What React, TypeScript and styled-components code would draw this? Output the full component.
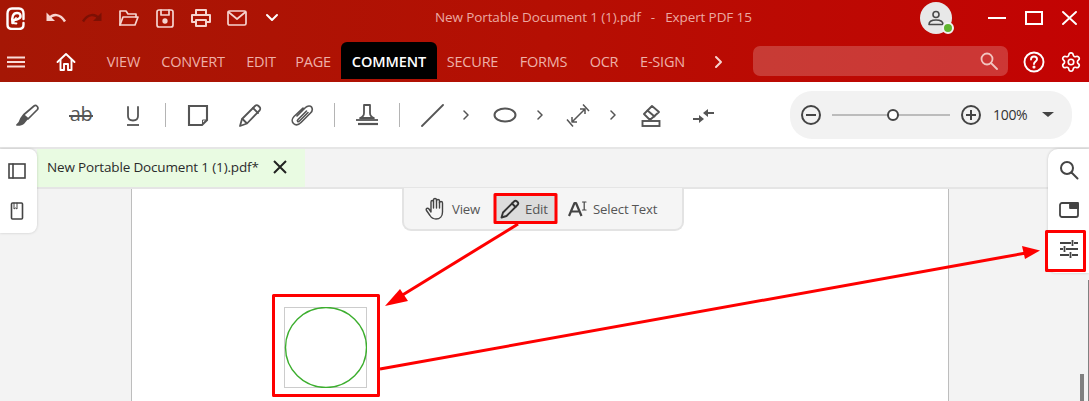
import React from "react";
import styled, { createGlobalStyle } from "styled-components";
import { Settings } from "lucide-react";

const Global = createGlobalStyle`
  html, body { margin: 0; padding: 0; background: #f3f3f3; }
  body { font-family: "Open Sans", "Noto Sans", "Liberation Sans", sans-serif; }
`;

const Screen = styled.div`
  position: relative;
  width: 1089px;
  height: 401px;
  overflow: hidden;
  display: flex;
  flex-direction: column;
`;

const Header = styled.header`
  height: 82px;
  flex: none;
  background: linear-gradient(90deg, #a51705 0%, #b50f03 50%, #c30303 100%);
  display: flex;
  flex-direction: column;
`;

const TitleBar = styled.div`
  position: relative;
  height: 42px;
  flex: none;
  display: flex;
  align-items: center;
  padding: 0 0 6px 0;
  box-sizing: border-box;
`;

const QuickIcon = styled.span<{ $left: number; $w?: number }>`
  display: flex;
  flex: none;
  width: ${(p) => p.$w ?? 22}px;
  margin-left: ${(p) => p.$left}px;
  justify-content: center;
`;

const DocTitle = styled.div`
  position: absolute;
  left: 435px;
  top: 8px;
  font-size: 13.5px;
  letter-spacing: -0.12px;
  word-spacing: 0;
  color: #eba9a2;
  white-space: pre;
`;

const TitleRight = styled.div`
  margin-left: auto;
  display: flex;
  align-items: center;
`;

const Avatar = styled.div`
  position: relative;
  width: 32px;
  height: 32px;
  border-radius: 50%;
  background: #e8e8e8;
  display: flex;
  align-items: center;
  justify-content: center;
  margin-right: 36px;
`;

const Presence = styled.span`
  position: absolute;
  right: -2px;
  bottom: 0;
  width: 8px;
  height: 8px;
  border-radius: 50%;
  background: #5fb52f;
  border: 2px solid #f2f2f2;
`;

const WinButton = styled.span<{ $mr: number }>`
  display: flex;
  margin-right: ${(p) => p.$mr}px;
`;

const MenuBar = styled.nav`
  height: 40px;
  display: flex;
  align-items: flex-start;
`;

const MenuIcon = styled.span<{ $ml: number }>`
  display: flex;
  height: 39px;
  align-items: center;
  margin-left: ${(p) => p.$ml}px;
`;

const Tab = styled.div<{ $active?: boolean; $ml: number; $w: number }>`
  flex: none;
  box-sizing: border-box;
  height: 37px;
  padding-top: 2px;
  width: ${(p) => p.$w}px;
  margin-left: ${(p) => p.$ml}px;
  display: flex;
  align-items: center;
  justify-content: center;
  white-space: nowrap;
  font-size: 14.5px;
  letter-spacing: ${(p) => (p.$active ? "-0.1px" : "-0.22px")};
  font-weight: ${(p) => (p.$active ? 600 : 400)};
  color: ${(p) => (p.$active ? "#ffffff" : "#eeb0a8")};
  background: ${(p) => (p.$active ? "#000000" : "transparent")};
  border-radius: ${(p) => (p.$active ? "6px 6px 0 0" : "0")};
`;

const SearchBox = styled.div`
  margin-left: 30px;
  margin-top: 4px;
  flex: none;
  width: 255px;
  height: 30px;
  border-radius: 7px;
  background: rgba(255, 255, 255, 0.2);
  display: flex;
  align-items: center;
  justify-content: flex-end;
  padding-right: 10px;
  box-sizing: border-box;
`;

const Toolbar = styled.div`
  height: 65px;
  flex: none;
  background: #ffffff;
  display: flex;
  align-items: center;
  padding-left: 16px;
  border-bottom: 2px solid #e6e6e6;
`;

const Tool = styled.span<{ $ml?: number; $w?: number }>`
  flex: none;
  display: flex;
  justify-content: center;
  width: ${(p) => p.$w ?? 24}px;
  margin-left: ${(p) => p.$ml ?? 0}px;
`;

const StruckLetters = styled.span`
  position: relative;
  display: block;
  width: 24px;
  height: 24px;
  line-height: 22px;
  text-align: center;
  font-size: 20px;
  letter-spacing: -0.5px;
  color: #555;
  &::after {
    content: "";
    position: absolute;
    left: 0;
    right: 0;
    top: 12px;
    height: 2px;
    background: #555;
  }
`;

const Sep = styled.span<{ $ml: number }>`
  flex: none;
  width: 1px;
  height: 24px;
  background: #b4b4b4;
  margin-left: ${(p) => p.$ml}px;
`;

const ZoomBox = styled.div`
  margin-left: auto;
  margin-right: 17px;
  width: 282px;
  height: 48px;
  border-radius: 22px;
  background: #f2f2f2;
  display: flex;
  align-items: center;
  box-sizing: border-box;
  padding-left: 11px;
`;

const Slider = styled.div`
  position: relative;
  width: 118px;
  height: 2px;
  background: #bcbcbc;
  margin: 0 11px;
`;

const Thumb = styled.span`
  position: absolute;
  left: 55px;
  top: -5px;
  width: 8px;
  height: 8px;
  border-radius: 50%;
  background: #fff;
  border: 2px solid #444;
`;

const ZoomValue = styled.span`
  margin-left: 12px;
  font-size: 14px;
  letter-spacing: -0.3px;
  color: #333;
`;

const Caret = styled.span`
  margin-left: 15px;
  width: 0;
  height: 0;
  border-left: 6px solid transparent;
  border-right: 6px solid transparent;
  border-top: 5px solid #444;
`;

const Body = styled.div`
  flex: 1;
  min-height: 0;
  display: flex;
  background: #f3f3f3;
`;

const Rail = styled.aside<{ $side: "left" | "right"; $h: number; $w: number; $gap: number; $top: number }>`
  position: relative;
  z-index: 2;
  flex: none;
  width: ${(p) => p.$w}px;
  height: ${(p) => p.$h}px;
  background: #ffffff;
  border-radius: ${(p) => (p.$side === "left" ? "0 8px 8px 0" : "10px 0 0 8px")};
  box-shadow: 0 0 3px rgba(0, 0, 0, 0.18);
  display: flex;
  flex-direction: column;
  align-items: center;
  gap: ${(p) => p.$gap}px;
  padding-top: ${(p) => p.$top}px;
  padding-right: ${(p) => (p.$side === "left" ? 3 : 0)}px;
  box-sizing: border-box;
`;

const Main = styled.main`
  flex: 1;
  min-width: 0;
  display: flex;
  flex-direction: column;
`;

const TabStrip = styled.div`
  height: 38px;
  flex: none;
  border-bottom: 2px solid #e5e5e5;
  display: flex;
`;

const DocTab = styled.div`
  width: 268px;
  box-sizing: border-box;
  background: #e9fbe2;
  display: flex;
  align-items: center;
  padding: 0 0 2px 10px;
  font-size: 13.5px;
  letter-spacing: -0.16px;
  color: #2b2b2b;
  white-space: nowrap;
`;

const CloseIcon = styled.span`
  display: flex;
  margin-left: 14px;
`;

const Canvas = styled.div`
  flex: 1;
  min-height: 0;
  display: flex;
  padding-left: 94px;
  padding-right: 99px;
`;

const Page = styled.div`
  flex: 1;
  background: #fff;
  border-left: 1px solid #bdbdbd;
  border-right: 1px solid #bdbdbd;
  display: flex;
  flex-direction: column;
`;

const ViewBar = styled.div`
  align-self: flex-start;
  margin-left: 270px;
  margin-top: -1px;
  width: 282px;
  height: 43px;
  box-sizing: border-box;
  background: #f5f5f5;
  border: 2px solid #e3e3e3;
  border-top: none;
  border-radius: 0 0 9px 9px;
  display: flex;
  align-items: center;
  padding-left: 21px;
  font-size: 13.2px;
  color: #555;
`;

const ViewItem = styled.div<{ $active?: boolean; $w: number; $ml: number }>`
  height: 28px;
  width: ${(p) => p.$w}px;
  margin-left: ${(p) => p.$ml}px;
  box-sizing: border-box;
  padding-left: ${(p) => (p.$active ? 5 : 0)}px;
  display: flex;
  align-items: center;
  gap: ${(p) => (p.$active ? 5 : 6)}px;
  flex: none;
  white-space: nowrap;
  letter-spacing: -0.16px;
  background: ${(p) => (p.$active ? "#dcdcdc" : "transparent")};
`;

const Drawn = styled.div`
  align-self: flex-start;
  margin-left: 152px;
  margin-top: 76px;
  display: flex;
`;

const Overlay = styled.svg`
  position: absolute;
  inset: 0;
  z-index: 5;
  pointer-events: none;
`;

const ScrollThumb = styled.span`
  position: absolute;
  z-index: 4;
  left: 1080px;
  top: 374px;
  width: 4px;
  height: 27px;
  background: #808080;
`;

const EdgeLine = styled.span`
  position: absolute;
  z-index: 4;
  right: 0;
  top: 280px;
  bottom: 0;
  width: 1px;
  background: #808080;
`;

type P = { c?: string; w?: number; h?: number; sw?: number; children?: React.ReactNode };
const Ic = ({ c = "#555", w = 24, h = 24, sw = 2, children }: P) => (
  <svg width={w} height={h} viewBox={`0 0 ${w} ${h}`} fill="none" stroke={c} strokeWidth={sw} strokeLinecap="round" strokeLinejoin="round">
    {children}
  </svg>
);

const Q = "#f6d4cf";
const Chevron = () => (
  <Ic w={6} h={10} sw={1.5}>
    <path d="M1 1l4 4-4 4" />
  </Ic>
);

export default function App() {
  return (
    <Screen>
      <Global />
      <Header>
        <TitleBar>
          <QuickIcon $left={6} $w={20}>
            <Ic c="#fff" w={20} h={24} sw={2.4}>
              <path d="M17.500 13V7.500c0-3-1.500-5-4.500-5H6c-3 0-4.500 2-4.500 5v11c0 3 1.500 4.500 4.500 4.500h7c3 0 4.500-1.500 4.500-4.500V17" />
              <path d="M6.500 17c-1-6 .5-10 4.500-10 4 0 4.500 4 2 5.500-1.500 1-3 1.500-5 1.500" />
              <path d="M10 12l-3.500 5 4 .5" strokeWidth="1.800" />
            </Ic>
          </QuickIcon>
          <QuickIcon $left={19}>
            <Ic c={Q} w={22} h={20} sw={2.5}>
              <polygon points="1.500,4.500 1.500,13 10,13" fill={Q} stroke="none" />
              <path d="M4 10.500C8 5.500 15 5.500 20 13.500" strokeLinecap="butt" />
            </Ic>
          </QuickIcon>
          <QuickIcon $left={14}>
            <Ic c="#7d1004" w={22} h={20} sw={2.5}>
              <polygon points="20.500,4.500 20.500,13 12,13" fill="#7d1004" stroke="none" />
              <path d="M18 10.500C14 5.500 7 5.500 2 13.500" strokeLinecap="butt" />
            </Ic>
          </QuickIcon>
          <QuickIcon $left={15}>
            <Ic c={Q} w={22} h={20} sw={1.7}>
              <path d="M2 17V3h6l2 3h8v3" />
              <path d="M2 17l3-8h15l-3 8z" />
            </Ic>
          </QuickIcon>
          <QuickIcon $left={14}>
            <Ic c={Q} w={20} h={20} sw={1.7}>
              <rect x="2" y="2" width="16" height="17" rx="2" />
              <path d="M6 2v5h8V2" />
              <circle cx="10" cy="13" r="1.800" fill={Q} />
            </Ic>
          </QuickIcon>
          <QuickIcon $left={14}>
            <Ic c={Q} w={22} h={20} sw={2}>
              <path d="M6 6V2h10v4" />
              <path d="M5 14H2V7h18v7h-3" />
              <rect x="6" y="12" width="10" height="6" />
            </Ic>
          </QuickIcon>
          <QuickIcon $left={14}>
            <Ic c={Q} w={22} h={18} sw={1.7}>
              <rect x="2" y="2" width="18" height="14" rx="1.500" />
              <path d="M2.500 3l8.500 7 8.500-7" />
            </Ic>
          </QuickIcon>
          <QuickIcon $left={13}>
            <Ic c="#fff" w={14} h={10} sw={2}>
              <path d="M2 2l5 5 5-5" />
            </Ic>
          </QuickIcon>
          <DocTitle>{"New Portable Document 1 (1).pdf   -   Expert PDF 15"}</DocTitle>
          <TitleRight>
            <Avatar>
              <Ic c="#4a4a4a" w={18} h={18} sw={1.6}>
                <circle cx="9" cy="5.500" r="3" />
                <path d="M2 15.500c0-3 3-4.500 7-4.500s7 1.500 7 4.500z" />
              </Ic>
              <Presence />
            </Avatar>
            <WinButton $mr={19}>
              <Ic c="#fff" w={18} h={4}>
                <path d="M0 2h18" strokeLinecap="butt" />
              </Ic>
            </WinButton>
            <WinButton $mr={19}>
              <Ic c="#fff" w={18} h={14}>
                <rect x="1" y="1" width="16" height="12" strokeLinejoin="miter" />
              </Ic>
            </WinButton>
            <WinButton $mr={12}>
              <Ic c="#fff" w={15} h={14} sw={1.9}>
                <path d="M1 1l13 12M14 1L1 13" />
              </Ic>
            </WinButton>
          </TitleRight>
        </TitleBar>
        <MenuBar>
          <MenuIcon $ml={7}>
            <Ic c="#f9dcd8" w={18} h={12} sw={1.8}>
              <path d="M0 1.500h18M0 6h18M0 10.500h18" strokeLinecap="butt" />
            </Ic>
          </MenuIcon>
          <MenuIcon $ml={31}>
            <Ic c="#fff" w={20} h={20} sw={1.9}>
              <path d="M1.500 10L10 2l8.500 8" />
              <path d="M4.500 8v10h3.500v-6h4v6h3.500V8" />
            </Ic>
          </MenuIcon>
          <Tab $ml={30} $w={35}>VIEW</Tab>
          <Tab $ml={20} $w={64}>CONVERT</Tab>
          <Tab $ml={21} $w={30}>EDIT</Tab>
          <Tab $ml={20} $w={34}>PAGE</Tab>
          <Tab $ml={11} $w={96} $active>COMMENT</Tab>
          <Tab $ml={10} $w={51}>SECURE</Tab>
          <Tab $ml={21} $w={49}>FORMS</Tab>
          <Tab $ml={21} $w={30}>OCR</Tab>
          <Tab $ml={20} $w={47}>E-SIGN</Tab>
          <MenuIcon $ml={28}>
            <Ic c="#f6d4cf" w={9} h={14} sw={2}>
              <path d="M2 2l5 5-5 5" />
            </Ic>
          </MenuIcon>
          <SearchBox>
            <Ic c="#f2c4bf" w={18} h={18} sw={1.8}>
              <circle cx="7" cy="7" r="5.500" />
              <path d="M11 11l6 6" />
            </Ic>
          </SearchBox>
          <MenuIcon $ml={15}>
            <Ic c="#fff" w={22} h={22} sw={1.9}>
              <circle cx="11" cy="11" r="9.500" />
              <path d="M8 8.500c0-2 1.400-3 3-3s3 1 3 2.800c0 2.200-3 2.400-3 4.700" />
              <circle cx="11" cy="16" r=".6" fill="#fff" />
            </Ic>
          </MenuIcon>
          <MenuIcon $ml={15}>
            <Settings size={22} color="#fff" strokeWidth={1.8} />
          </MenuIcon>
        </MenuBar>
      </Header>

      <Toolbar>
        <Tool>
          <Ic sw={1.7}>
            <path d="M1 22c4 0 6-.5 7.500-3l3-3.500-4-3.500-2.500 3.500C4 19 3 20.500 1 22z" fill="#555" />
            <path d="M8 11.500L18 3c2-1.500 5 1 3.500 3.500L12 16" />
          </Ic>
        </Tool>
        <Tool $ml={29}>
          <StruckLetters>ab</StruckLetters>
        </Tool>
        <Tool $ml={28}>
          <Ic sw={1.8}>
            <path d="M7 4v9c0 3 2 4.500 5 4.500s5-1.500 5-4.500V4" />
            <path d="M6 22h12" strokeLinecap="butt" />
          </Ic>
        </Tool>
        <Sep $ml={20} />
        <Tool $ml={20}>
          <Ic sw={2.1}>
            <path d="M3 3h18v14l-5 5H3z" strokeLinejoin="miter" />
            <path d="M20.500 17H16.500V21" strokeWidth="1" strokeLinecap="butt" />
          </Ic>
        </Tool>
        <Tool $ml={28}>
          <Ic sw={1.8}>
            <path d="M2 23l2-7L17 3c1-1 2.500-1 3.500 0l1 1c1 1 1 2.500 0 3.500L9 20.500z" />
            <path d="M15 5l5 5M4.500 16l4 4" />
          </Ic>
        </Tool>
        <Tool $ml={28}>
          <Ic sw={1.6}>
            <path d="M7 13l8.500-8.500c2-2 5-2 6 -.5s1 4-1 6L11 19.500c-2.500 2.500-5.500 3-7.500 1s-1.500-5 .5-7L13 5" />
            <path d="M16.500 8L8 16.500c-1.500 1.500 0 3 1.500 1.500L18 9.500" />
          </Ic>
        </Tool>
        <Sep $ml={20} />
        <Tool $ml={20}>
          <Ic sw={1.8}>
            <path d="M9 2h6v8c0 3 1 4 4 5H5c3-1 4-2 4-5z" />
            <path d="M1 17h22" strokeLinecap="butt" />
            <path d="M3 21h20" strokeLinecap="butt" strokeWidth="2.200" />
          </Ic>
        </Tool>
        <Sep $ml={20} />
        <Tool $ml={20}>
          <Ic sw={1.8}>
            <path d="M2 23L23 2" />
          </Ic>
        </Tool>
        <Tool $ml={18} $w={8}>
          <Chevron />
        </Tool>
        <Tool $ml={23}>
          <Ic w={24} h={18} sw={2}>
            <ellipse cx="12" cy="9" rx="10.500" ry="6.500" />
          </Ic>
        </Tool>
        <Tool $ml={19} $w={8}>
          <Chevron />
        </Tool>
        <Tool $ml={22}>
          <Ic sw={1.5}>
            <path d="M6 19L19 6M14 6h5v5M6 14v5h5M1 16.500l6 7M17 1.500l6 6.500" strokeLinecap="butt" />
          </Ic>
        </Tool>
        <Tool $ml={19} $w={8}>
          <Chevron />
        </Tool>
        <Tool $ml={22}>
          <Ic sw={1.9}>
            <path d="M5 11l8-8 7 6-8 7h-2z" />
            <path d="M8.500 7.500l7 6" />
            <rect x="3.500" y="18" width="17" height="5" strokeLinejoin="miter" />
          </Ic>
        </Tool>
        <Tool $ml={28}>
          <Ic sw={2}>
            <path d="M2 16h7M23 10h-7" strokeLinecap="butt" />
            <polygon points="13,16 8,12 8,20" fill="#555" stroke="none" />
            <polygon points="12,10 17,6 17,14" fill="#555" stroke="none" />
          </Ic>
        </Tool>
        <ZoomBox>
          <Ic c="#444" w={20} h={20} sw={2}>
            <circle cx="10" cy="10" r="9" />
            <path d="M5 10h10" strokeLinecap="butt" />
          </Ic>
          <Slider>
            <Thumb />
          </Slider>
          <Ic c="#444" w={20} h={20} sw={2}>
            <circle cx="10" cy="10" r="9" />
            <path d="M5 10h10M10 5v10" strokeLinecap="butt" />
          </Ic>
          <ZoomValue>100%</ZoomValue>
          <Caret />
        </ZoomBox>
      </Toolbar>

      <Body>
        <Rail $side="left" $h={84} $w={37} $gap={23} $top={14}>
          <Ic c="#444" w={18} h={16} sw={1.6}>
            <rect x="1" y="1" width="16" height="14" strokeLinejoin="miter" />
            <path d="M5 1v14" />
          </Ic>
          <Ic c="#444" w={14} h={18} sw={1.6}>
            <path d="M1.500 2c0-.500.500-1 1-1h9c.500 0 1 .500 1 1v14c0 .500-.500 1-1 1h-9c-.500 0-1-.500-1-1z" />
            <path d="M4 1v6l1.500-1L7 7V1" strokeWidth="1" />
          </Ic>
        </Rail>
        <Main>
          <TabStrip>
            <DocTab>
              New Portable Document 1 (1).pdf*
              <CloseIcon>
                <Ic c="#222" w={14} h={14} sw={2}>
                  <path d="M1 1l12 12M13 1L1 13" strokeLinecap="butt" />
                </Ic>
              </CloseIcon>
            </DocTab>
          </TabStrip>
          <Canvas>
            <Page>
              <ViewBar>
                <ViewItem $w={58} $ml={0}>
                  <Ic c="#444" w={21} h={23} sw={1.4}>
                    <path d="M6 15V5c0-2 2.500-2 2.500 0v-2c0-2 3-2 3 0v1c0-2 3-2 3 0v2c0-2 3-2 3 0v9c0 4-2.500 7-6.500 7-3 0-4.500-1-6-3.500l-3.500-5c-1-2 1-3 2.500-1.500z" />
                    <path d="M8.500 5v6M11.500 4v7M14.500 5v6" />
                  </Ic>
                  View
                </ViewItem>
                <ViewItem $w={61} $ml={12} $active>
                  <Ic c="#333" w={20} h={20} sw={1.9}>
                    <path d="M1.500 18.500l1.500-5L14 2.500c1-1 2-1 3 0l.5.5c1 1 1 2 0 3L6.500 17z" />
                    <path d="M12 4.500l3.500 3.500" />
                  </Ic>
                  Edit
                </ViewItem>
                <ViewItem $w={100} $ml={12}>
                  <Ic c="#444" w={19} h={18} sw={1.2}>
                    <path d="M1 16L6.500 3h1.500l5.500 13M3.500 11.500h7.500" strokeWidth="2.200" strokeLinecap="butt" />
                    <path d="M14.500 2h3.500M16.200 2v8M14.500 10h3.500" />
                  </Ic>
                  Select Text
                </ViewItem>
              </ViewBar>
              <Drawn>
                <svg width="83" height="81" viewBox="0 0 83 81" fill="none">
                  <rect x=".5" y=".5" width="82" height="80" stroke="#cccccc" />
                  <ellipse cx="42" cy="40.500" rx="40.500" ry="40" stroke="#3cae2e" strokeWidth="1.400" />
                </svg>
              </Drawn>
            </Page>
          </Canvas>
        </Main>
        <Rail $side="right" $h={124} $w={41} $gap={22} $top={11}>
          <Ic c="#444" w={20} h={20} sw={2}>
            <circle cx="8" cy="8" r="6" />
            <path d="M12.500 12.500l6 6" />
          </Ic>
          <Ic c="#444" w={20} h={16} sw={1.8}>
            <rect x="1" y="1" width="18" height="14" rx="2" />
            <rect x="11" y="1" width="8" height="5" fill="#444" />
          </Ic>
          <Ic c="#444" w={20} h={18} sw={1.8}>
            <path d="M1 3h11M15 3h4M1 9h3M7 9h12M1 15h9M13 15h6M13.500 0v6M5.500 6v6M11.500 12v6" strokeLinecap="butt" />
          </Ic>
        </Rail>
      </Body>
      <ScrollThumb />
      <EdgeLine />

      <Overlay width="1089" height="401" viewBox="0 0 1089 401" fill="none">
        <g stroke="#fe0000" strokeWidth="3" strokeLinejoin="round">
          <rect x="495" y="194.500" width="61" height="28" />
          <rect x="1046.500" y="231.500" width="38" height="39" />
          <rect x="273.500" y="295.500" width="105" height="100" />
          <path d="M518 224L396 299" />
          <path d="M380 369L1026 253" />
        </g>
        <polygon points="385,306 400,289 408,301" fill="#fe0000" />
        <polygon points="1040,250.500 1022,246 1025,259" fill="#fe0000" />
      </Overlay>
    </Screen>
  );
}
